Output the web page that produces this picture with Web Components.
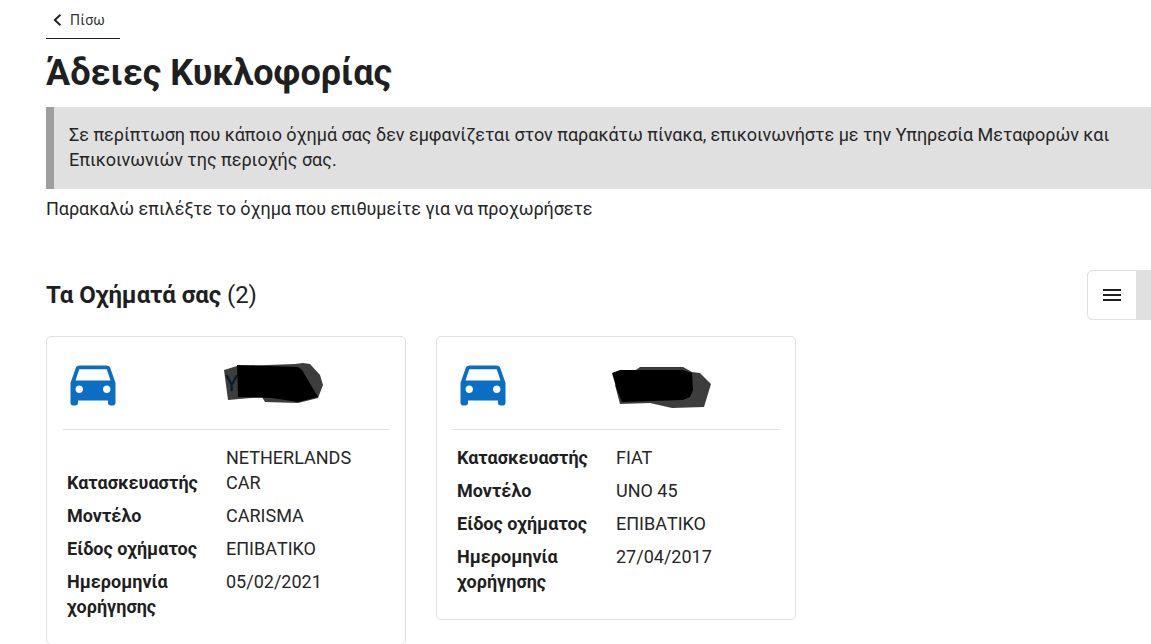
<!DOCTYPE html>
<html lang="el">
<head>
<meta charset="utf-8">
<title>Άδειες Κυκλοφορίας</title>
<style>
  html, body { margin: 0; padding: 0; background: #fff; overflow: hidden; }
  body { font-family: Roboto, "Noto Sans", sans-serif; color: #262626; }
</style>
</head>
<body>
<template id="tpl-page">
  <style>
    :host { display: block; padding: 0 0 0 46px; height: 644px; overflow: hidden; box-sizing: border-box; }
    h1 { margin: 13px 0 13px; font-size: 36px; line-height: 42px; font-weight: 700; color: #1f1f1f; }
    p { margin: 7px 0 0; font-size: 18px; line-height: 25px; letter-spacing: -.05px; }
    .head { display: flex; align-items: center; justify-content: space-between; margin-top: 49px; height: 50px; }
    h2 { margin: 0; font-size: 24px; font-weight: 700; line-height: 30px; color: #1f1f1f; letter-spacing: -.05px; }
    h2 span { font-weight: 400; }
    .cards { display: flex; gap: 30px; align-items: flex-start; margin-top: 16px; }
  </style>
  <slot name="back"></slot>
  <h1>Άδειες Κυκλοφορίας</h1>
  <slot name="note"></slot>
  <p>Παρακαλώ επιλέξτε το όχημα που επιθυμείτε για να προχωρήσετε</p>
  <div class="head">
    <h2>Τα Οχήματά σας <span>(2)</span></h2>
    <slot name="tools"></slot>
  </div>
  <div class="cards"><slot></slot></div>
</template>

<template id="tpl-back">
  <style>
    :host { display: block; width: 74px; height: 39px; box-sizing: border-box; border-bottom: 1px solid #1f1f1f; }
    a { display: flex; align-items: center; gap: 6px; padding: 11px 0 0 6px; font-size: 14px; line-height: 18px; color: #333; text-decoration: none; letter-spacing: .3px; }
    svg { width: 12px; height: 12px; display: block; }
  </style>
  <a href="#">
    <svg viewBox="0 0 12 12" fill="none" stroke="#1f1f1f" stroke-width="1.9"><path d="M8.4.7 2.8 6l5.6 5.3"/></svg>
    <slot></slot>
  </a>
</template>

<template id="tpl-note">
  <style>
    :host { display: block; box-sizing: border-box; background: #e0e0e0; border-left: 8px solid #9e9e9e; padding: 15px 40px 17px 15px; font-size: 18px; line-height: 25px; color: #262626; letter-spacing: -.02px; }
  </style>
  <slot></slot>
</template>

<template id="tpl-tools">
  <style>
    :host { display: flex; width: 64px; height: 50px; background: #e0e0e0; border-radius: 6px 0 0 6px; }
    button { width: 50px; height: 50px; box-sizing: border-box; padding: 0; background: #fff; border: 1px solid #e0e0e0; border-radius: 6px 0 0 6px; display: flex; align-items: center; justify-content: center; }
    svg { width: 18px; height: 12px; display: block; }
  </style>
  <button aria-label="Λίστα">
    <svg viewBox="0 0 18 12" fill="#1f1f1f"><rect y="0" width="18" height="2"/><rect y="5" width="18" height="2"/><rect y="10" width="18" height="2"/></svg>
  </button>
</template>

<template id="tpl-card">
  <style>
    :host { display: block; position: relative; width: 360px; box-sizing: border-box; background: #fff; border: 1px solid #e0e0e0; border-radius: 5px; padding: 0 16px 17px; flex: none; }
    .top { display: flex; align-items: center; height: 92px; border-bottom: 1px solid #e0e0e0; }
    svg.car { width: 60px; height: 60px; flex: none; display: block; }
    .plate { margin-left: 102px; font-size: 22px; color: #0a6ebd; }
    svg.ink { position: absolute; width: 120px; height: 55px; }
    .rows { padding: 15px 0 0 4px; }
  </style>
  <div class="top">
    <svg class="car" viewBox="0 0 24 24" fill="#0b6ec5"><path d="M18.92 6.01C18.72 5.42 18.16 5 17.5 5h-11c-.66 0-1.21.42-1.42 1.01L3 12v8c0 .55.45 1 1 1h1c.55 0 1-.45 1-1v-1h12v1c0 .55.45 1 1 1h1c.55 0 1-.45 1-1v-8l-2.08-5.99zM6.5 16c-.83 0-1.5-.67-1.5-1.5S5.67 13 6.5 13s1.5.67 1.5 1.5S7.33 16 6.5 16zm11 0c-.83 0-1.5-.67-1.5-1.5s.67-1.5 1.5-1.5 1.5.67 1.5 1.5-.67 1.5-1.5 1.5zM5 11l1.5-4.5h11L19 11H5z"/></svg>
    <span class="plate" id="plate"></span>
  </div>
  <svg class="ink" id="ink" viewBox="0 0 120 55"></svg>
  <div class="rows"><slot></slot></div>
</template>

<template id="tpl-row">
  <style>
    :host { display: grid; grid-template-columns: 159px 1fr; margin-bottom: 8px; font-size: 18px; line-height: 25px; }
    .l { font-weight: 700; align-self: end; padding-right: 10px; color: #1f1f1f; }
    .v { align-self: start; padding-right: 10px; }
  </style>
  <div class="l"><slot name="label"></slot></div>
  <div class="v"><slot></slot></div>
</template>

<app-page>
  <back-link slot="back">Πίσω</back-link>
  <note-box slot="note">Σε περίπτωση που κάποιο όχημά σας δεν εμφανίζεται στον παρακάτω πίνακα, επικοινωνήστε με την Υπηρεσία Μεταφορών και Επικοινωνιών της περιοχής σας.</note-box>
  <view-tools slot="tools"></view-tools>
  <vehicle-card plate="Y" ink-x="168" ink-y="18" ink="1">
    <info-row><span slot="label">Κατασκευαστής</span>NETHERLANDS CAR</info-row>
    <info-row><span slot="label">Μοντέλο</span>CARISMA</info-row>
    <info-row><span slot="label">Είδος οχήματος</span>ΕΠΙΒΑΤΙΚΟ</info-row>
    <info-row><span slot="label">Ημερομηνία χορήγησης</span>05/02/2021</info-row>
  </vehicle-card>
  <vehicle-card ink-x="163" ink-y="23" ink="2">
    <info-row><span slot="label">Κατασκευαστής</span>FIAT</info-row>
    <info-row><span slot="label">Μοντέλο</span>UNO 45</info-row>
    <info-row><span slot="label">Είδος οχήματος</span>ΕΠΙΒΑΤΙΚΟ</info-row>
    <info-row><span slot="label">Ημερομηνία χορήγησης</span>27/04/2017</info-row>
  </vehicle-card>
</app-page>

<script>
// Μικρή βοηθητική κλάση: κλωνοποιεί το template στο shadow root
class Base extends HTMLElement {
  constructor(id) {
    super();
    this.attachShadow({ mode: "open" });
    this.shadowRoot.appendChild(document.getElementById(id).content.cloneNode(true));
  }
}

class AppPage extends Base { constructor() { super("tpl-page"); } }
class BackLink extends Base { constructor() { super("tpl-back"); } }
class NoteBox extends Base { constructor() { super("tpl-note"); } }
class ViewTools extends Base { constructor() { super("tpl-tools"); } }
class InfoRow extends Base { constructor() { super("tpl-row"); } }

// Οι μουτζούρες πάνω από τις πινακίδες
const INK = {
  "1": `<path fill="#000" fill-opacity=".76" d="M9 15 22 11 80 9 88 8 95 9 105 20 108 30 103 43 83 48 50 47 47 42 13 45z"/>
        <path fill="#000" d="M22 10 83 12 87 15 103 42 83 47 57 43 23 42z"/>`,
  "2": `<path fill="#000" fill-opacity=".76" d="M15 25 40 7 83 7 92 12 100 13 111 24 104 47 72 48 50 43 20 44z"/>
        <path fill="#000" d="M12 13 20 10 83 10 92 13 93 30 90 37 83 40 22 42 17 30z"/>`
};

class VehicleCard extends Base {
  constructor() { super("tpl-card"); }
  connectedCallback() {
    const s = this.shadowRoot;
    s.getElementById("plate").textContent = this.getAttribute("plate") || "";
    const ink = s.getElementById("ink");
    ink.innerHTML = INK[this.getAttribute("ink")];
    ink.style.left = this.getAttribute("ink-x") + "px";
    ink.style.top = this.getAttribute("ink-y") + "px";
  }
}

customElements.define("app-page", AppPage);
customElements.define("back-link", BackLink);
customElements.define("note-box", NoteBox);
customElements.define("view-tools", ViewTools);
customElements.define("info-row", InfoRow);
customElements.define("vehicle-card", VehicleCard);
</script>
</body>
</html>
